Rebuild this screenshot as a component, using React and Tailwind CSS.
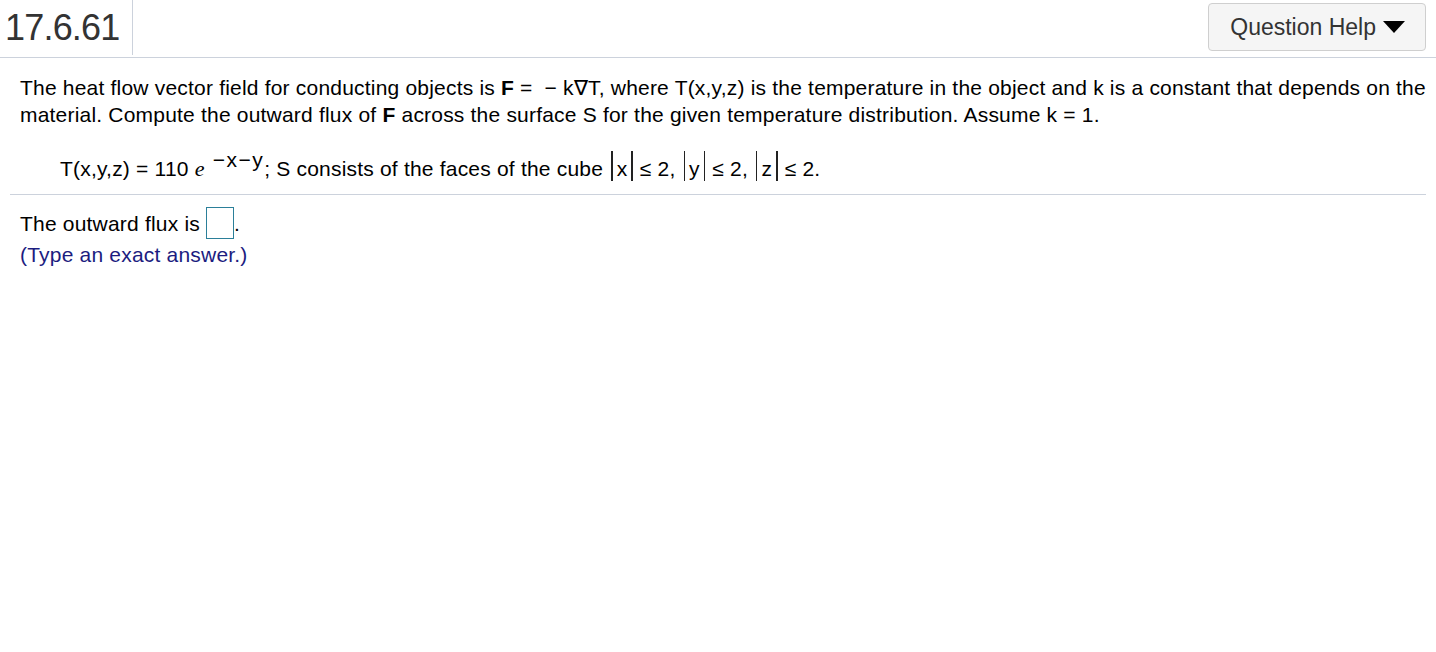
import React from 'react';

const Bar = ({ className = '' }) => (
  <span className={`inline-block w-[1.5px] h-[30px] -mt-[7px] bg-[#222] align-[-5px] ${className}`} />
);

const Abs = ({ v }) => (
  <span>
    <Bar className="ml-[2px] mr-[4px]" />{v}<Bar className="ml-[4px] mr-[7px]" />
  </span>
);

export default function App() {
  return (
    <div className="w-[1436px] h-[652px] bg-white text-black" style={{ fontFamily: '"Liberation Sans", Arial, sans-serif' }}>
      {/* header */}
      <div className="flex items-stretch justify-between h-[58px] border-b border-[#ccd2dc]">
        <div className="flex items-center pl-[5px] pr-[12px] border-r border-[#ccd2dc] h-[55px]">
          <span className="text-[36px] leading-none text-[#333] tracking-[-0.8px]">17.6.61</span>
        </div>
        <div className="pr-[10px] pt-[3px]">
          <button className="flex items-center gap-[7px] h-[48px] pl-[21px] pr-[20px] bg-[#f5f5f5] border border-[#cfcfcf] rounded-[4px] text-[23px] text-[#333]">
            <span>Question Help</span>
            <svg width="22" height="14" viewBox="0 0 22 14"><polygon points="0,1 22,1 11,13" fill="#000" /></svg>
          </button>
        </div>
      </div>

      {/* question */}
      <div className="pl-[20px] pr-[8px] pt-[16px] text-[21px] leading-[27px] tracking-[0.2px]">
        <p>
          The heat flow vector field for conducting objects is <b>F</b> = &nbsp;− k∇T, where T(x,y,z) is the temperature in the object and k is a constant that depends on the material. Compute the outward flux of <b>F</b> across the surface S for the given temperature distribution. Assume k = 1.
        </p>
        <p className="pl-[40px] mt-[27px]">
          T(x,y,z) = 110 <i className="text-[22px]" style={{ fontFamily: '"Liberation Serif", serif' }}>e</i>
          <span className="text-[21px] relative -top-[9px] ml-[8px] tracking-[1.5px]">−x−y</span>; S consists of the faces of the cube <Abs v="x" />≤ 2, <Abs v="y" />≤ 2, <Abs v="z" />≤ 2.
        </p>
      </div>
      <div className="mx-[10px] mt-[12px] border-b border-[#ccd2dc]" />

      <div className="px-[20px] pt-[12px] text-[21px] leading-[31px] tracking-[0.2px]">
        <div className="flex items-center">
          <span>The outward flux is&nbsp;</span>
          <span className="inline-block w-[28px] h-[32px] border border-[#2b7f99] bg-white" />
          <span>.</span>
        </div>
        <div className="text-[#1c1c80]">(Type an exact answer.)</div>
      </div>
    </div>
  );
}
